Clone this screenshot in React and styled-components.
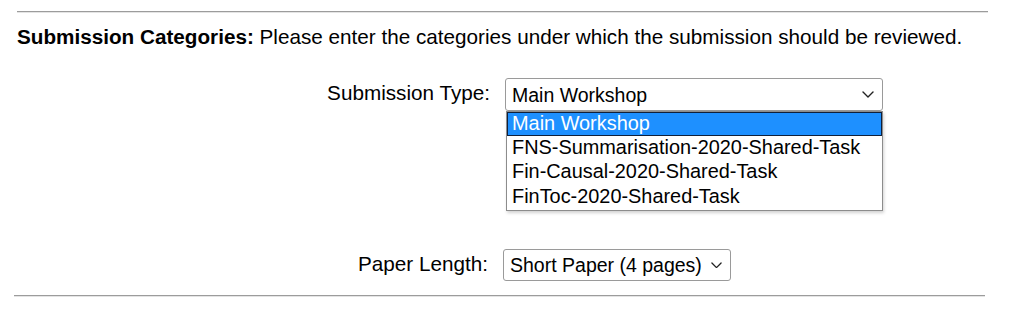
import React from 'react';
import styled, { createGlobalStyle } from 'styled-components';

const GlobalStyle = createGlobalStyle`
  html, body {
    margin: 0;
    padding: 0;
    background: #ffffff;
  }
  body {
    font-family: "Liberation Sans", Arial, sans-serif;
    color: #000;
  }
`;

const submissionTypes = [
  'Main Workshop',
  'FNS-Summarisation-2020-Shared-Task',
  'Fin-Causal-2020-Shared-Task',
  'FinToc-2020-Shared-Task',
];

const Chevron = ({ size = 12 }) => (
  <svg width={size} height={size * 0.6} viewBox="0 0 12 7" fill="none">
    <path d="M1 1 L6 6 L11 1" stroke="#222" strokeWidth="1.4" strokeLinecap="round" strokeLinejoin="round" />
  </svg>
);

const App = () => (
  <Page>
    <GlobalStyle />
    <Rule />
    <Intro>
      <strong>Submission Categories:</strong> Please enter the categories under which the submission should be reviewed.
    </Intro>

    <Form>
      <Label>Submission Type:</Label>
      <Field>
        <SelectBox $width={378} $height={33}>
          <span>Main Workshop</span>
          <Chevron />
        </SelectBox>
        <Listbox>
          {submissionTypes.map((t, i) => (
            <Option key={t} $selected={i === 0}>{t}</Option>
          ))}
        </Listbox>
      </Field>

      <Spacer />

      <Label $shift={-2}>Paper Length:</Label>
      <Field>
        <SelectBox $width={228} $height={32} $shift={-2}>
          <span>Short Paper (4 pages)</span>
          <Chevron size={11} />
        </SelectBox>
      </Field>
    </Form>

    <Rule $bottom />
  </Page>
);

export default App;

/* --- Styled Components --- */

const Page = styled.div`
  width: 1024px;
  height: 324px;
  padding-top: 11px;
  box-sizing: border-box;
  overflow: hidden;
`;

const Rule = styled.hr`
  margin: ${p => (p.$bottom ? '14px 0 0 14px' : '0 0 0 17px')};
  width: 971px;
  height: 0;
  border: none;
  border-top: 1px solid #9c9c9c;
  border-bottom: 1px solid #e4e4e4;
`;

const Intro = styled.p`
  margin: 12px 0 0 17px;
  font-size: 20.7px;
  line-height: 24px;

  strong {
    font-weight: 700;
  }
`;

const Form = styled.div`
  display: grid;
  grid-template-columns: 490px auto;
  column-gap: 15px;
  margin-top: 29px;
  font-size: 20.7px;
`;

const Label = styled.div`
  justify-self: end;
  align-self: center;
  line-height: 24px;
  padding-bottom: 3px;
  margin-right: ${p => -(p.$shift || 0)}px;
`;

const Field = styled.div`
  position: relative;
  justify-self: start;
`;

const Spacer = styled.div`
  grid-column: 1 / span 2;
  height: 138px;
`;

const SelectBox = styled.div`
  box-sizing: border-box;
  width: ${p => p.$width}px;
  height: ${p => p.$height}px;
  margin-left: ${p => p.$shift || 0}px;
  border: 1px solid #9a9a9a;
  border-radius: 3px;
  background: #fff;
  display: flex;
  align-items: center;
  justify-content: space-between;
  padding: 0 8px 0 6px;
  font-size: 19.5px;
  line-height: 22px;

  span {
    white-space: nowrap;
  }

  svg {
    flex-shrink: 0;
    margin-left: 6px;
  }
`;

const Listbox = styled.div`
  position: absolute;
  top: 100%;
  left: 1px;
  width: 377px;
  box-sizing: border-box;
  border: 1px solid #8c8c8c;
  background: #fff;
  box-shadow: 1px 2px 3px rgba(0, 0, 0, 0.18);
  padding: 0 0 1px 0;
  display: flex;
  flex-direction: column;
  z-index: 5;
`;

const Option = styled.div`
  box-sizing: border-box;
  height: 24.2px;
  line-height: 21px;
  padding: 0 4px;
  font-size: 19.9px;
  white-space: nowrap;
  color: ${p => (p.$selected ? '#fff' : '#000')};
  background: ${p => (p.$selected ? '#1e90ff' : 'transparent')};
  border: 1px solid ${p => (p.$selected ? '#10203a' : 'transparent')};
`;
